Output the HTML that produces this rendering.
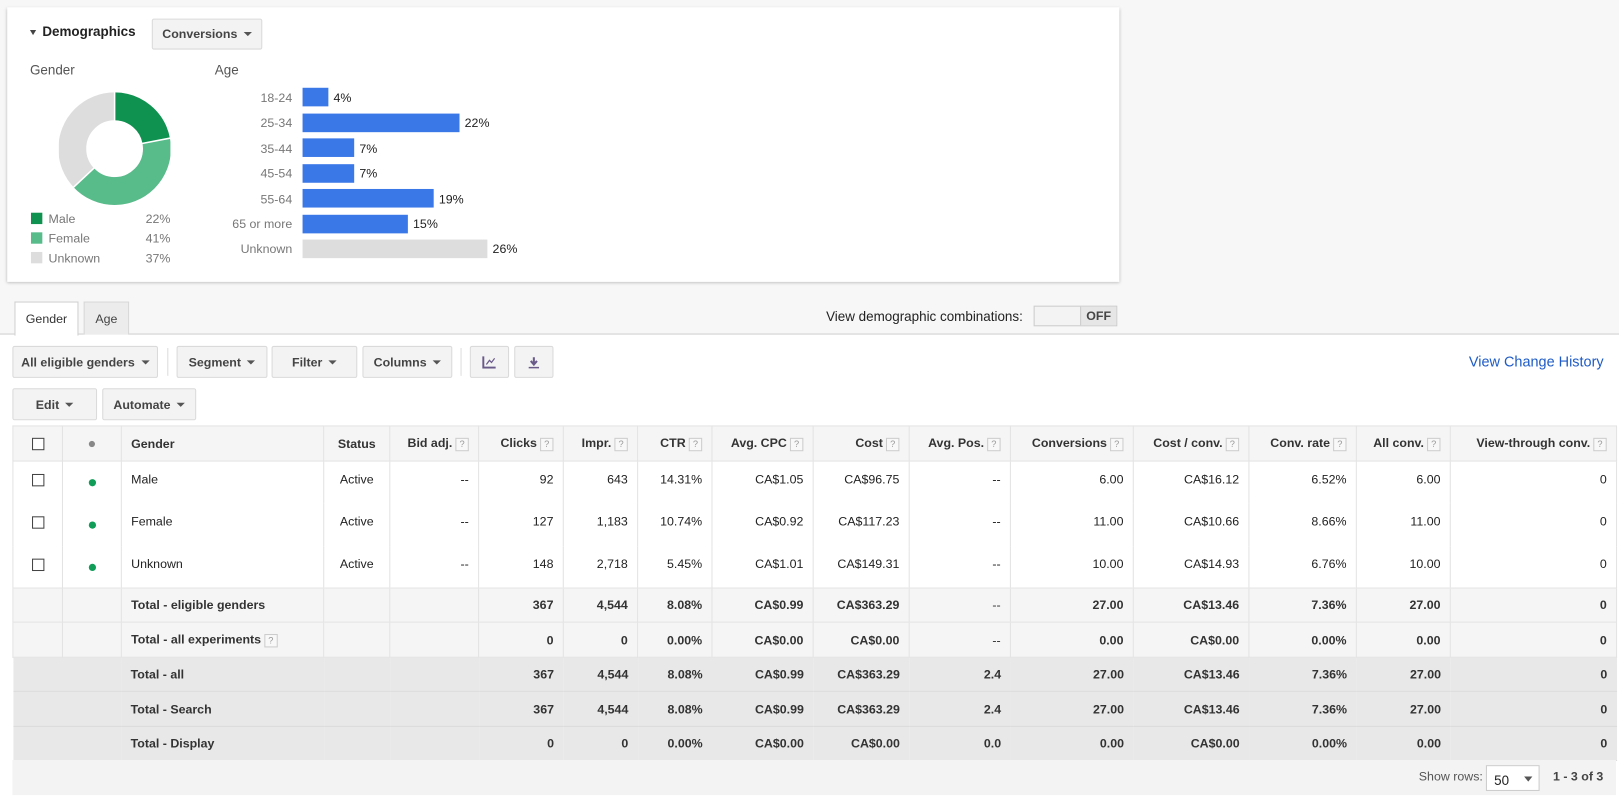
<!DOCTYPE html>
<html><head><meta charset="utf-8"><style>
*{box-sizing:border-box;margin:0;padding:0}
body{width:1619px;height:801px;background:#fff;font-family:"Liberation Sans",Arial,sans-serif;font-size:12px;color:#222;overflow:hidden}
#w{position:absolute;left:0;top:0;width:1568px;height:776px;transform:scale(1.0326);transform-origin:0 0}
.top{position:absolute;left:0;top:0;width:1568px;height:324px;background:#f7f7f7;border-bottom:1px solid #d0d0d0}
.card{position:absolute;left:7px;top:7px;width:1077px;height:266px;background:#fff;box-shadow:0 1px 3px rgba(0,0,0,.25)}
.abs{position:absolute}
.btn{position:absolute;background:#f3f3f3;border:1px solid #dadada;border-radius:2px;font-weight:bold;font-size:12px;color:#444;display:flex;align-items:center;justify-content:center}
.caret{display:inline-block;width:0;height:0;border-left:4px solid transparent;border-right:4px solid transparent;border-top:4px solid #555;margin-left:6px}
.lbl{position:absolute;color:#777;font-size:12px}
.bar{position:absolute;left:293px;height:18px;background:#3b78e7}
.pct{position:absolute;font-size:12px;color:#222}
table{position:absolute;left:12px;top:412px;border-collapse:collapse;table-layout:fixed;width:1553px}
td,th{font-size:12px;padding:0 9px;text-align:right;white-space:nowrap;border:1px solid #e3e3e3}
th{background:#f5f5f5;height:34px;font-weight:bold;color:#333}
.l{text-align:left}
.c{text-align:center}
.q{display:inline-block;width:13px;height:13px;border:1px solid #ccc;background:#f8f8f8;color:#999;font-size:9px;line-height:11px;text-align:center;font-weight:normal;vertical-align:middle;margin-left:3px}
tr.d td{height:41px;background:#fff;border-top:none;border-bottom:none;padding-bottom:6px}
tr.t td{background:#f5f5f5;font-weight:bold;color:#333}
tr.g td{background:#e8e8e8;font-weight:bold;color:#333;border-left:none;border-right:none;border-color:#dcdcdc}
.cb{display:inline-block;width:12px;height:12px;border:1px solid #444;background:#fff;vertical-align:middle}
.dot{display:inline-block;width:7px;height:7px;border-radius:50%;background:#0f9d58;vertical-align:middle;margin-top:6px}
</style></head><body><div id="w">
<div class="top"></div>
<div class="card"></div>
<div class="abs" style="left:29px;top:23px;font-weight:bold;font-size:13px;color:#222"><span style="display:inline-block;border-left:3.5px solid transparent;border-right:3.5px solid transparent;border-top:5px solid #444;vertical-align:middle;margin-right:6px"></span>Demographics</div>
<div class="btn" style="left:147px;top:18px;width:107px;height:30px">Conversions<span class="caret"></span></div>
<div class="abs" style="left:29px;top:60px;font-size:13px;color:#555">Gender</div>
<div class="abs" style="left:208px;top:60px;font-size:13px;color:#555">Age</div>
<svg class="abs" style="left:57px;top:89px" width="108" height="112" viewBox="0 0 108 112">
<g transform="translate(54,55) rotate(-90)">
<circle r="41" fill="none" stroke="#ddd" stroke-width="27"/>
<circle r="41" fill="none" stroke="#57bb8a" stroke-width="27" stroke-dasharray="105.6 400" stroke-dashoffset="-56.7"/>
<circle r="41" fill="none" stroke="#0f9150" stroke-width="27" stroke-dasharray="56.7 400"/>
<line x1="27" y1="0" x2="55" y2="0" stroke="#fff" stroke-width="1.5"/>
<line x1="27" y1="0" x2="55" y2="0" stroke="#fff" stroke-width="1.5" transform="rotate(79.2)"/>
<line x1="27" y1="0" x2="55" y2="0" stroke="#fff" stroke-width="1.5" transform="rotate(226.8)"/>
</g></svg>
<div class="abs" style="left:30px;top:206px;width:11px;height:11px;background:#0f9150"></div>
<div class="abs" style="left:30px;top:225px;width:11px;height:11px;background:#57bb8a"></div>
<div class="abs" style="left:30px;top:244px;width:11px;height:11px;background:#ddd"></div>
<div class="lbl" style="left:47px;top:205px">Male</div><div class="lbl" style="left:141px;top:205px">22%</div>
<div class="lbl" style="left:47px;top:224px">Female</div><div class="lbl" style="left:141px;top:224px">41%</div>
<div class="lbl" style="left:47px;top:243px">Unknown</div><div class="lbl" style="left:141px;top:243px">37%</div>

<div class="lbl" style="right:1285px;top:88px">18-24</div><div class="bar" style="top:85px;width:25px"></div><div class="pct" style="left:323px;top:88px">4%</div>
<div class="lbl" style="right:1285px;top:112px">25-34</div><div class="bar" style="top:110px;width:152px"></div><div class="pct" style="left:450px;top:112px">22%</div>
<div class="lbl" style="right:1285px;top:137px">35-44</div><div class="bar" style="top:134px;width:50px"></div><div class="pct" style="left:348px;top:137px">7%</div>
<div class="lbl" style="right:1285px;top:161px">45-54</div><div class="bar" style="top:159px;width:50px"></div><div class="pct" style="left:348px;top:161px">7%</div>
<div class="lbl" style="right:1285px;top:186px">55-64</div><div class="bar" style="top:183px;width:127px"></div><div class="pct" style="left:425px;top:186px">19%</div>
<div class="lbl" style="right:1285px;top:210px">65 or more</div><div class="bar" style="top:208px;width:102px"></div><div class="pct" style="left:400px;top:210px">15%</div>
<div class="lbl" style="right:1285px;top:234px">Unknown</div><div class="bar" style="top:232px;width:179px;background:#ddd"></div><div class="pct" style="left:477px;top:234px">26%</div>

<div class="abs" style="left:14px;top:292px;width:62px;height:33px;background:#fff;border:1px solid #d0d0d0;border-bottom:none;font-size:12px;color:#333;text-align:center;line-height:32px">Gender</div>
<div class="abs" style="left:81px;top:292px;width:44px;height:32px;background:#ececec;border:1px solid #d8d8d8;border-bottom:none;font-size:12px;color:#444;text-align:center;line-height:32px">Age</div>
<div class="abs" style="left:800px;top:299px;font-size:13px;color:#222">View demographic combinations:</div>
<div class="abs" style="left:1001px;top:296px;width:81px;height:20px;border:1px solid #ccc;background:#f3f3f3"><div style="position:absolute;right:0;top:0;width:35px;height:18px;background:#e6e6e6;border-left:1px solid #ccc;font-weight:bold;font-size:12px;color:#444;text-align:center;line-height:18px">OFF</div></div>

<div class="btn" style="left:12px;top:335px;width:141px;height:31px">All eligible genders<span class="caret"></span></div>
<div class="abs" style="left:162px;top:337px;width:1px;height:27px;background:#ddd"></div>
<div class="btn" style="left:171px;top:335px;width:88px;height:31px">Segment<span class="caret"></span></div>
<div class="btn" style="left:263px;top:335px;width:83px;height:31px">Filter<span class="caret"></span></div>
<div class="btn" style="left:351px;top:335px;width:87px;height:31px">Columns<span class="caret"></span></div>
<div class="abs" style="left:446px;top:337px;width:1px;height:27px;background:#ddd"></div>
<div class="btn" style="left:455px;top:335px;width:38px;height:31px"><svg width="14" height="12" viewBox="0 0 14 12"><path d="M1 0V11H13" stroke="#6a5a8a" stroke-width="2" fill="none"/><path d="M4 8L7 4L9 6L12 2" stroke="#6a5a8a" stroke-width="1.2" fill="none"/></svg></div>
<div class="btn" style="left:498px;top:335px;width:38px;height:31px"><svg width="12" height="12" viewBox="0 0 12 12"><path d="M6 1V7M3 4.5L6 8L9 4.5" stroke="#6a5a8a" stroke-width="2" fill="none"/><path d="M1 11H11" stroke="#6a5a8a" stroke-width="1.5"/></svg></div>
<div class="abs" style="right:15px;top:342px;font-size:14px;color:#1e5bc6">View Change History</div>
<div class="btn" style="left:12px;top:376px;width:82px;height:31px">Edit<span class="caret"></span></div>
<div class="btn" style="left:99px;top:376px;width:91px;height:31px">Automate<span class="caret"></span></div>

<table>
<colgroup><col style="width:48px"><col style="width:57px"><col style="width:196px"><col style="width:64px"><col style="width:86px"><col style="width:82px"><col style="width:72px"><col style="width:72px"><col style="width:98px"><col style="width:93px"><col style="width:98px"><col style="width:119px"><col style="width:112px"><col style="width:104px"><col style="width:91px"><col style="width:161px"></colgroup>
<tr><th class="c"><span class="cb"></span></th><th class="c"><span class="dot" style="background:#888;margin:0;width:6px;height:6px"></span></th><th class="l">Gender</th><th class="c">Status</th><th>Bid adj.<span class="q">?</span></th><th>Clicks<span class="q">?</span></th><th>Impr.<span class="q">?</span></th><th>CTR<span class="q">?</span></th><th>Avg. CPC<span class="q">?</span></th><th>Cost<span class="q">?</span></th><th>Avg. Pos.<span class="q">?</span></th><th>Conversions<span class="q">?</span></th><th>Cost / conv.<span class="q">?</span></th><th>Conv. rate<span class="q">?</span></th><th>All conv.<span class="q">?</span></th><th>View-through conv.<span class="q">?</span></th></tr>
<tr class="d"><td class="c"><span class="cb"></span></td><td class="c"><span class="dot"></span></td><td class="l">Male</td><td class="c">Active</td><td>--</td><td>92</td><td>643</td><td>14.31%</td><td>CA$1.05</td><td>CA$96.75</td><td>--</td><td>6.00</td><td>CA$16.12</td><td>6.52%</td><td>6.00</td><td>0</td></tr>
<tr class="d"><td class="c"><span class="cb"></span></td><td class="c"><span class="dot"></span></td><td class="l">Female</td><td class="c">Active</td><td>--</td><td>127</td><td>1,183</td><td>10.74%</td><td>CA$0.92</td><td>CA$117.23</td><td>--</td><td>11.00</td><td>CA$10.66</td><td>8.66%</td><td>11.00</td><td>0</td></tr>
<tr class="d"><td class="c"><span class="cb"></span></td><td class="c"><span class="dot"></span></td><td class="l">Unknown</td><td class="c">Active</td><td>--</td><td>148</td><td>2,718</td><td>5.45%</td><td>CA$1.01</td><td>CA$149.31</td><td>--</td><td>10.00</td><td>CA$14.93</td><td>6.76%</td><td>10.00</td><td>0</td></tr>
<tr class="t" style="height:33px"><td></td><td></td><td class="l">Total - eligible genders</td><td></td><td></td><td>367</td><td>4,544</td><td>8.08%</td><td>CA$0.99</td><td>CA$363.29</td><td style="font-weight:normal">--</td><td>27.00</td><td>CA$13.46</td><td>7.36%</td><td>27.00</td><td>0</td></tr>
<tr class="t" style="height:34px"><td></td><td></td><td class="l">Total - all experiments<span class="q">?</span></td><td></td><td></td><td>0</td><td>0</td><td>0.00%</td><td>CA$0.00</td><td>CA$0.00</td><td style="font-weight:normal">--</td><td>0.00</td><td>CA$0.00</td><td>0.00%</td><td>0.00</td><td>0</td></tr>
<tr class="g" style="height:33px"><td></td><td></td><td class="l">Total - all</td><td></td><td></td><td>367</td><td>4,544</td><td>8.08%</td><td>CA$0.99</td><td>CA$363.29</td><td>2.4</td><td>27.00</td><td>CA$13.46</td><td>7.36%</td><td>27.00</td><td>0</td></tr>
<tr class="g" style="height:34px"><td></td><td></td><td class="l">Total - Search</td><td></td><td></td><td>367</td><td>4,544</td><td>8.08%</td><td>CA$0.99</td><td>CA$363.29</td><td>2.4</td><td>27.00</td><td>CA$13.46</td><td>7.36%</td><td>27.00</td><td>0</td></tr>
<tr class="g" style="height:33px"><td></td><td></td><td class="l">Total - Display</td><td></td><td></td><td>0</td><td>0</td><td>0.00%</td><td>CA$0.00</td><td>CA$0.00</td><td>0.0</td><td>0.00</td><td>CA$0.00</td><td>0.00%</td><td>0.00</td><td>0</td></tr>
</table>
<div class="abs" style="left:12px;top:736px;width:1553px;height:34px;background:#f3f3f3"></div>
<div class="abs" style="left:1374px;top:745px;font-size:12px;color:#555">Show rows:</div>
<div class="abs" style="left:1439px;top:741px;width:52px;height:25px;background:#fff;border:1px solid #ccc;font-size:13px;color:#222;padding:6px 0 0 7px">50<span style="position:absolute;right:6px;top:10px;border-left:4px solid transparent;border-right:4px solid transparent;border-top:5px solid #555"></span></div>
<div class="abs" style="left:1504px;top:745px;font-size:12px;font-weight:bold;color:#444">1 - 3 of 3</div>
</div></body></html>
